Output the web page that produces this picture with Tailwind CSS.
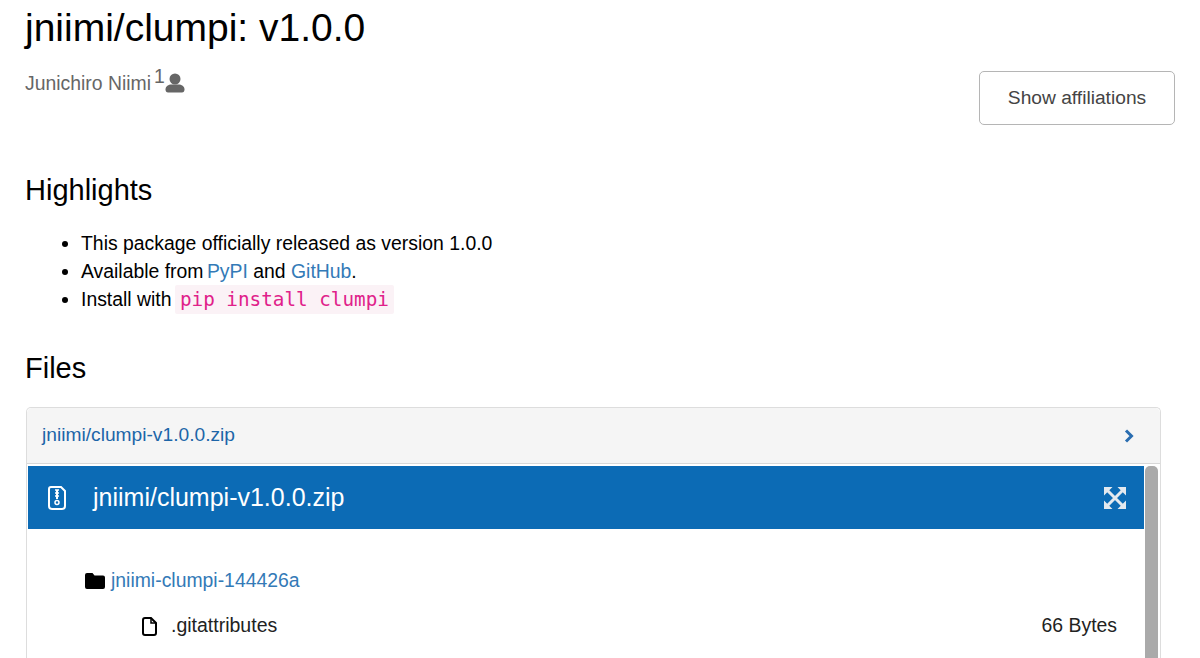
<!DOCTYPE html>
<html lang="en">
<head>
  <meta charset="UTF-8" />
  <meta name="viewport" content="width=device-width, initial-scale=1.0" />
  <title>jniimi/clumpi: v1.0.0</title>
  <script src="https://cdn.jsdelivr.net/npm/@tailwindcss/browser@4"></script>
</head>
<body class="bg-white h-[658px] overflow-hidden font-['Liberation_Sans',sans-serif] text-black">
  <div class="pl-[25px] pr-[25px]">
    <h1 class="text-[39px] leading-[44px] pt-[6px]">jniimi/clumpi: v1.0.0</h1>

    <!-- Authors -->
    <div class="flex justify-between items-start mt-[21px]">
      <div class="flex items-start text-[#666666] text-[19.4px] leading-[24px]">
        <span>Junichiro Niimi</span>
        <sup class="text-[19.4px] leading-[20px] ml-[3px] top-0 mt-[-5px]">1</sup>
        <svg class="w-[20px] h-[20px] mt-[2px]" viewBox="0 0 20 20" fill="#666666">
          <circle cx="10" cy="6" r="5.500" />
          <path d="M0.500 16.500c0-3.500 3-5 6-5h7c3 0 6 1.500 6 5 0 2-1 3-2.500 3H3c-1.500 0-2.500-1-2.500-3z" />
        </svg>
      </div>
      <button class="w-[196px] h-[54px] border-[1.500px] border-[#b5b5b5] rounded-[5px] text-[19.2px] text-[#444444] bg-white">Show affiliations</button>
    </div>

    <h2 class="text-[29px] leading-[34px] mt-[48px]">Highlights</h2>
    <ul class="list-disc pl-[56px] mt-[22px] text-[19.4px] leading-[28px] marker:text-black">
      <li>This package officially released as version 1.0.0</li>
      <li>Available from <a class="text-[#337ab7] ml-[-2px]">PyPI</a> and <a class="text-[#337ab7]">GitHub</a>.</li>
      <li>Install with <code class="font-['DejaVu_Sans_Mono',monospace] text-[#e0218a] bg-[#fbf2f6] text-[19.3px] px-[5px] py-[3px] rounded-[2px] ml-[-2px]">pip install clumpi</code></li>
    </ul>

    <h2 class="text-[29px] leading-[34px] mt-[37px]">Files</h2>

    <!-- Files panel -->
    <div class="mt-[22px] ml-[1px] w-[1135px] border border-[#dddddd] border-b-0 rounded-t-[5px]">
      <div class="flex justify-between items-center h-[56px] pl-[15px] pr-[26px] bg-[#f5f5f5] border-b-[1.500px] border-[#d8d8d8] rounded-t-[5px]">
        <a class="text-[#1c65a8] text-[19.2px]">jniimi/clumpi-v1.0.0.zip</a>
        <svg class="w-[10px] h-[14px]" viewBox="0 0 10 14" fill="none" stroke="#2a6db0" stroke-width="3"><path d="M2 1.500 7.500 7 2 12.500" /></svg>
      </div>
      <div class="flex h-[200px] pl-[1px] pt-[2px]">
        <div class="w-[1116px]">
          <div class="flex justify-between items-center h-[63px] bg-[#0c6bb5] text-white pl-[20px] pr-[18px]">
            <div class="flex items-center">
              <!-- zip file icon -->
              <svg class="w-[18px] h-[24px]" viewBox="0 0 18 24" fill="none" stroke="white" stroke-width="2">
                <path d="M3 1h10l4 4v15a3 3 0 0 1-3 3H4a3 3 0 0 1-3-3V3a2 2 0 0 1 2-2z" />
                <path d="M7 4h4M7 7h4M7 10h4" stroke-width="1.500" />
                <path d="M9 4v9" stroke-width="2" />
                <circle cx="9" cy="16.500" r="2" stroke-width="1.500" />
              </svg>
              <span class="text-[25px] ml-[27px]">jniimi/clumpi-v1.0.0.zip</span>
            </div>
            <!-- expand icon -->
            <svg class="w-[22px] h-[22px]" viewBox="0 0 22 22" fill="#e3e9ef">
              <path d="M0 0h8.500L0 8.500zM22 0v8.500L13.500 0zM0 22v-8.500L8.500 22zM22 22h-8.500L22 13.500z" />
              <path d="M3 3 19 19M19 3 3 19" stroke="#e3e9ef" stroke-width="3" />
            </svg>
          </div>
          <div class="pl-[57px] pr-[27px] pt-[39px]">
            <div class="flex items-center h-[26px]">
              <svg class="w-[20px] h-[16px]" viewBox="0 0 20 16" fill="black"><path d="M2 0h5.500l2 2.500H18a2 2 0 0 1 2 2V14a2 2 0 0 1-2 2H2a2 2 0 0 1-2-2V2a2 2 0 0 1 2-2z" /></svg>
              <a class="text-[#337ab7] text-[19.4px] ml-[6px]">jniimi-clumpi-144426a</a>
            </div>
            <div class="flex justify-between items-center h-[26px] mt-[19px] pl-[57px]">
              <div class="flex items-center">
                <svg class="w-[15px] h-[19px]" viewBox="0 0 15 19" fill="none" stroke="black" stroke-width="2"><path d="M3 1h6l5 5v10a2 2 0 0 1-2 2H3a2 2 0 0 1-2-2V3a2 2 0 0 1 2-2z" /><path d="M9 1v5h5" stroke-width="1.500" /></svg>
                <span class="text-[19.5px] ml-[14px] text-[#222222]">.gitattributes</span>
              </div>
              <span class="text-[19.4px] text-[#222222]">66 Bytes</span>
            </div>
          </div>
        </div>
        <div class="w-[13px] ml-[1px] bg-[#aaaaaa] rounded-t-[5px]"></div>
      </div>
    </div>
  </div>
</body>
</html>
